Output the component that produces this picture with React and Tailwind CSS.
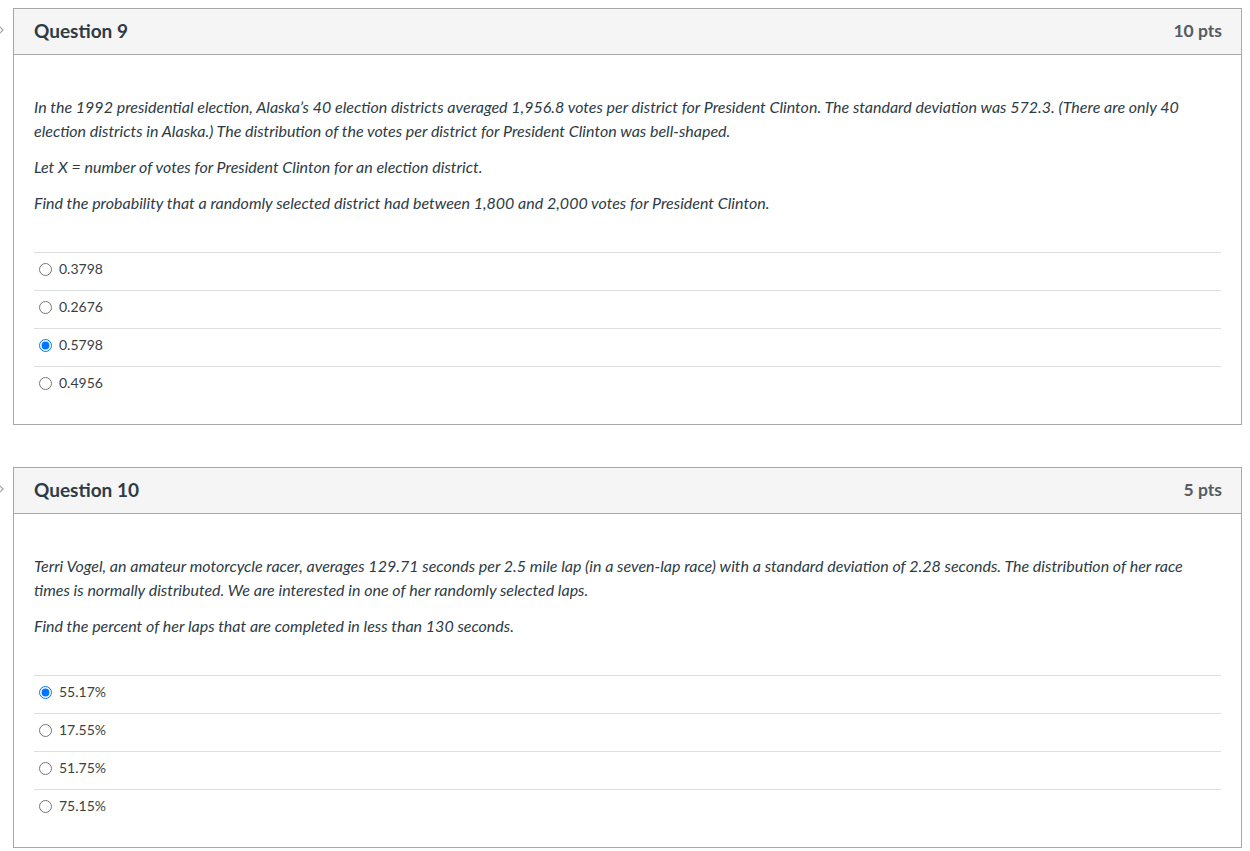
import React from "react";

const questions = [
  {
    title: "Question 9",
    pts: "10 pts",
    paras: [
      "In the 1992 presidential election, Alaska’s 40 election districts averaged 1,956.8 votes per district for President Clinton. The standard deviation was 572.3. (There are only 40 election districts in Alaska.) The distribution of the votes per district for President Clinton was bell-shaped.",
      "Let X = number of votes for President Clinton for an election district.",
      "Find the probability that a randomly selected district had between 1,800 and 2,000 votes for President Clinton.",
    ],
    answers: ["0.3798", "0.2676", "0.5798", "0.4956"],
    checked: 2,
  },
  {
    title: "Question 10",
    pts: "5 pts",
    paras: [
      "Terri Vogel, an amateur motorcycle racer, averages 129.71 seconds per 2.5 mile lap (in a seven-lap race) with a standard deviation of 2.28 seconds. The distribution of her race times is normally distributed. We are interested in one of her randomly selected laps.",
      "Find the percent of her laps that are completed in less than 130 seconds.",
    ],
    answers: ["55.17%", "17.55%", "51.75%", "75.15%"],
    checked: 0,
  },
];

function Chevron() {
  return (
    <svg
      className="absolute left-[-4px] top-[15px]"
      width="9"
      height="14"
      viewBox="0 0 9 14"
      fill="none"
    >
      <path d="M2 2 L7 7 L2 12" stroke="#9aa3a8" strokeWidth="1.2" />
    </svg>
  );
}

function Question({ q, qi }) {
  return (
    <div className="relative">
      <Chevron />
      <div className="ml-[13px] w-[1229px] border border-[#a8a8a8] bg-white">
        <div className="flex h-[46px] items-center justify-between border-b border-[#a8a8a8] bg-[#f5f5f5] pl-[20px] pr-[19px]">
          <div className="text-[19px] font-bold leading-[26px] text-[#2d3b45] -mt-[2px]">{q.title}</div>
          <div className="text-[17.5px] font-bold text-[#555b60]">{q.pts}</div>
        </div>
        <div className="px-[20px] pt-[40px] pb-[20px]">
          <div className="text-[16px] italic leading-[24px] text-[#2d3b45]">
            {q.paras.map((p, i) => (
              <p key={i} className={i > 0 ? "mt-[12px]" : ""}>
                {p}
              </p>
            ))}
          </div>
          <div className="mt-[37px]">
            {q.answers.map((a, i) => (
              <label
                key={i}
                className="flex h-[38px] items-start border-t border-[#dcdfe1] pt-[8px]"
              >
                <input
                  type="radio"
                  name={"q" + qi}
                  defaultChecked={i === q.checked}
                  className="m-0 ml-[5px] mr-[7px] mt-[2px] h-[13px] w-[13px]"
                />
                <span className="text-[14px] leading-[16px] text-[#3b3f42]">{a}</span>
              </label>
            ))}
          </div>
        </div>
      </div>
    </div>
  );
}

export default function App() {
  return (
    <div
      className="min-h-[851px] bg-white pt-[8px]"
      style={{ fontFamily: "Lato, 'Open Sans', sans-serif" }}
    >
      <div className="flex flex-col gap-[42px]">
        {questions.map((q, i) => (
          <Question key={i} q={q} qi={i} />
        ))}
      </div>
    </div>
  );
}
